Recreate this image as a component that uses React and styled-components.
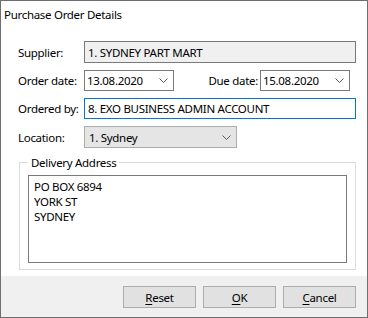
import React from 'react'
import styled, { createGlobalStyle } from 'styled-components'

const GlobalStyle = createGlobalStyle`
  html, body {
    margin: 0;
    padding: 0;
    background: #ffffff;
  }
  * {
    box-sizing: border-box;
  }
`

const Chevron = () => (
  <svg width="9" height="5" viewBox="0 0 9 5">
    <polyline points="0.5,0.5 4.5,4.5 8.5,0.5" fill="none" stroke="#5a5a5a" strokeWidth="1" />
  </svg>
)

const PurchaseOrderDialog = () => {
  return (
    <StyledWindow>
      <GlobalStyle />
      <TitleBar>Purchase Order Details</TitleBar>
      <Body>
        <Form>
          <Label>Supplier:</Label>
          <TextField $variant="readonly">1. SYDNEY PART MART</TextField>

          <Label>Order date:</Label>
          <DateRow>
            <Combo $width={90}>
              <span>13.08.2020</span>
              <Chevron />
            </Combo>
            <DueLabel>Due date:</DueLabel>
            <Combo $width={90}>
              <span>15.08.2020</span>
              <Chevron />
            </Combo>
          </DateRow>

          <Label>Ordered by:</Label>
          <TextField $variant="focused">8. EXO BUSINESS ADMIN ACCOUNT</TextField>

          <Label>Location:</Label>
          <Combo $width={153} $variant="dropdown">
            <span>1. Sydney</span>
            <Chevron />
          </Combo>
        </Form>

        <GroupBox>
          <legend>Delivery Address</legend>
          <AddressBox>
            <div>PO BOX 6894</div>
            <div>YORK ST</div>
            <div>SYDNEY</div>
          </AddressBox>
        </GroupBox>
      </Body>
      <ButtonBar>
        <Button><u>R</u>eset</Button>
        <Button><u>O</u>K</Button>
        <Button><u>C</u>ancel</Button>
      </ButtonBar>
    </StyledWindow>
  )
}

const StyledWindow = styled.div`
    width: 368px;
    height: 318px;
    border: 1px solid #6f6f6f;
    background: #ffffff;
    display: flex;
    flex-direction: column;
    font-family: "Noto Sans", "Open Sans", sans-serif;
    font-size: 11.5px;
    letter-spacing: -0.3px;
    color: #000000;
`

const TitleBar = styled.div`
    height: 29px;
    padding-left: 3px;
    display: flex;
    align-items: center;
    padding-bottom: 3px;
`

const Body = styled.div`
    flex: 1;
    padding: 11px 12px 0 17px;
`

const Form = styled.div`
    display: grid;
    grid-template-columns: 66px 1fr;
    grid-template-rows: 22px 21px 21px 22px;
    row-gap: 7px;
    align-items: center;
    width: 338px;
`

const Label = styled.div`
    white-space: nowrap;
`

const TextField = styled.div`
    height: ${({$variant}) => $variant === 'readonly' ? '22px' : '21px'};
    display: flex;
    align-items: center;
    padding-left: 3px;
    border: 1px solid ${({$variant}) => $variant === 'focused' ? '#0078d7' : '#7a7a7a'};
    background: ${({$variant}) => $variant === 'readonly' ? '#f0f0f0' : '#ffffff'};
    white-space: nowrap;
`

const DateRow = styled.div`
    display: flex;
    align-items: center;
    padding-right: 6px;
`

const DueLabel = styled.div`
    margin-left: auto;
    margin-right: 2px;
`

const Combo = styled.div`
    width: ${({$width}) => $width}px;
    height: ${({$variant}) => $variant === 'dropdown' ? '22px' : '21px'};
    display: flex;
    align-items: center;
    justify-content: space-between;
    padding: 0 5px 0 ${({$variant}) => $variant === 'dropdown' ? '4px' : '2px'};
    border: 1px solid ${({$variant}) => $variant === 'dropdown' ? '#adadad' : '#7a7a7a'};
    background: ${({$variant}) => $variant === 'dropdown' ? '#e5e5e5' : '#ffffff'};
    white-space: nowrap;
`

const GroupBox = styled.fieldset`
    margin: 7px 0 0 1px;
    width: 337px;
    padding: 0 8px 6px 8px;
    border: 1px solid #dcdcdc;

    legend {
        padding: 0 3px;
        margin-left: 0;
        line-height: 15px;
    }
`

const AddressBox = styled.div`
    margin-top: 5px;
    height: 88px;
    border: 1px solid #7a7a7a;
    padding: 3px 5px;
    line-height: 15px;
`

const ButtonBar = styled.div`
    height: 41px;
    background: #f0f0f0;
    display: flex;
    justify-content: flex-end;
    align-items: flex-start;
    gap: 7px;
    padding: 10px 11px 0 0;
`

const Button = styled.div`
    width: 73px;
    height: 22px;
    border: 1px solid #adadad;
    background: #e1e1e1;
    display: flex;
    align-items: center;
    justify-content: center;

    u {
        text-decoration-thickness: 1px;
        text-underline-offset: 2px;
    }
`

export default PurchaseOrderDialog
